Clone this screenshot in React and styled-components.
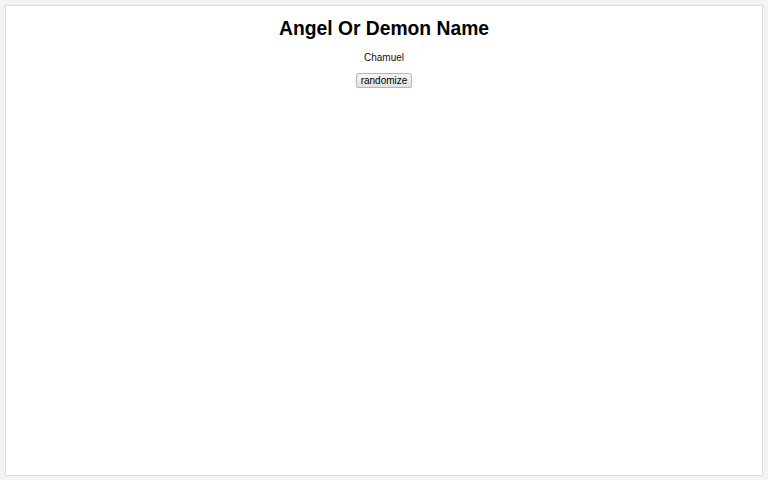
import React, { useState } from 'react';
import styled, { createGlobalStyle } from 'styled-components';

const GlobalStyle = createGlobalStyle`
  html, body {
    margin: 0;
    padding: 0;
    background: #f3f3f3;
    font-family: "Liberation Sans", Arial, sans-serif;
  }
`;

const Page = styled.div`
  box-sizing: border-box;
  height: 480px;
  padding: 5px 5px 4px 5px;
`;

const Card = styled.div`
  box-sizing: border-box;
  height: 471px;
  background: #fff;
  border: 1px solid #dcdcdc;
  display: flex;
  flex-direction: column;
  align-items: center;
  padding-top: 12px;
`;

const Title = styled.h1`
  margin: 0;
  font-size: 19.3px;
  font-weight: bold;
  color: #000;
  line-height: 22px;
`;

const Name = styled.div`
  margin-top: 12px;
  font-size: 10px;
  color: #111;
  line-height: 12px;
`;

const Button = styled.button`
  margin-top: 9px;
  font-family: "Liberation Sans", Arial, sans-serif;
  font-size: 10px;
  line-height: 13px;
  padding: 0 4px;
  color: #000;
  background: linear-gradient(#f6f6f6, #e2e2e2);
  border: 1px solid #b4b4b4;
  border-radius: 2px;
`;

const names = ['Chamuel', 'Gabriel', 'Raphael', 'Uriel', 'Azazel', 'Belial', 'Jophiel', 'Asmodeus'];

export default function App() {
  const [name, setName] = useState('Chamuel');
  return (
    <>
      <GlobalStyle />
      <Page>
        <Card>
          <Title>Angel Or Demon Name</Title>
          <Name>{name}</Name>
          <Button onClick={() => setName(names[Math.floor(Math.random() * names.length)])}>
            randomize
          </Button>
        </Card>
      </Page>
    </>
  );
}
